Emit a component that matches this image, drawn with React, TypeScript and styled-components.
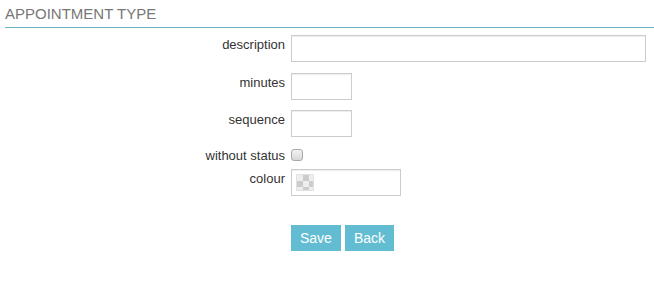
import React, { useState } from 'react';
import styled, { createGlobalStyle } from 'styled-components';

const GlobalStyle = createGlobalStyle`
    body {
        margin: 0;
        background: #fff;
        font-family: "Liberation Sans", Arial, sans-serif;
        color: #333;
    }
`

const Page = styled.div`
    padding: 0 0 0 5px;
`

const Title = styled.h2`
    margin: 0;
    padding-top: 5px;
    height: 22px;
    font-size: 15px;
    line-height: 17px;
    font-weight: normal;
    color: #777;
    border-bottom: 1px solid #6cb3c7;
`

const Form = styled.form`
    display: flex;
    flex-direction: column;
    padding-top: 7px;
`

interface RowProps {
    gap?: number;
}

const Row = styled.div<RowProps>`
    display: flex;
    align-items: flex-start;
    gap: 6px;
    margin-bottom: ${({gap}) => gap ?? 10}px;
`

const Label = styled.label`
    width: 280px;
    text-align: right;
    font-size: 13px;
    line-height: 18px;
    padding-top: 1px;
    color: #333;
`

interface FieldProps {
    width: number;
}

const Field = styled.input<FieldProps>`
    box-sizing: border-box;
    width: ${({width}) => width}px;
    height: 27px;
    margin: 0;
    padding: 3px 6px;
    border: 1px solid #ccc;
    border-radius: 0;
    background: #fff;
    box-shadow: inset 0 1px 1px rgba(0, 0, 0, 0.075);
    font-family: "Liberation Sans", Arial, sans-serif;
    font-size: 13px;
    outline: none;
`

const Check = styled.span`
    display: inline-block;
    box-sizing: border-box;
    width: 12px;
    height: 12px;
    margin-top: 3px;
    border: 1px solid #a9a9a9;
    border-radius: 3px;
    background: linear-gradient(#f2f2f2, #d8d8d8);
    cursor: pointer;
`

const ColourBox = styled.div`
    display: flex;
    align-items: center;
    box-sizing: border-box;
    width: 110px;
    height: 27px;
    padding-left: 4px;
    border: 1px solid #ccc;
    background: #fff;
    box-shadow: inset 0 1px 1px rgba(0, 0, 0, 0.075);
`

const Swatch = styled.span`
    display: inline-block;
    width: 18px;
    height: 17px;
    background: repeating-conic-gradient(#ccc 0 25%, #eee 0 50%) 0 0 / 12px 12px;
    border: 1px solid #e2e2e2;
    box-sizing: border-box;
`

const Actions = styled.div`
    display: flex;
    gap: 4px;
    padding-left: 286px;
`

const Button = styled.button`
    height: 26px;
    padding: 0 9px;
    border: none;
    border-radius: 0;
    background: #62bdd3;
    color: #fff;
    font-family: "Liberation Sans", Arial, sans-serif;
    font-size: 14px;
    cursor: pointer;
`

const App = () => {
    const [withoutStatus, setWithoutStatus] = useState(false);

    return (
        <Page>
            <GlobalStyle />
            <Title>APPOINTMENT TYPE</Title>
            <Form onSubmit={(e) => e.preventDefault()}>
                <Row gap={11}>
                    <Label>description</Label>
                    <Field width={355} />
                </Row>
                <Row>
                    <Label>minutes</Label>
                    <Field width={61} />
                </Row>
                <Row gap={9}>
                    <Label>sequence</Label>
                    <Field width={61} />
                </Row>
                <Row gap={4}>
                    <Label>without status</Label>
                    <Check onClick={() => setWithoutStatus(!withoutStatus)} />
                </Row>
                <Row gap={29}>
                    <Label>colour</Label>
                    <ColourBox>
                        <Swatch />
                    </ColourBox>
                </Row>
                <Actions>
                    <Button type="submit">Save</Button>
                    <Button type="button">Back</Button>
                </Actions>
            </Form>
        </Page>
    );
};

export default App;
